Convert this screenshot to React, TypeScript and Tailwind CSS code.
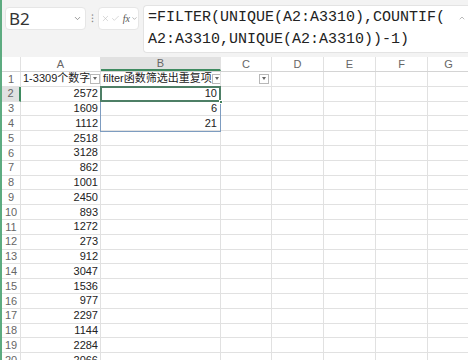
import { ChevronDown, ChevronUp, X, Check } from "lucide-react";

const COLS = ["A", "B", "C", "D", "E", "F", "G"];
const WIDTHS = [80, 120, 51, 52, 52, 52, 42];
const NUMS = [2572, 1609, 1112, 2518, 3128, 862, 1001, 2450, 893, 1272, 273, 912, 3047, 1536, 977, 2297, 1144, 2284, 2066];
const SPILL: Record<number, number> = { 2: 10, 3: 6, 4: 21 };

const FilterBtn = () => (
  <span className="w-[10px] h-[10px] border border-[#b8b8b8] bg-white flex items-center justify-center shrink-0">
    <span className="w-0 h-0 border-l-[2.5px] border-r-[2.5px] border-t-[3px] border-l-transparent border-r-transparent border-t-[#666]" />
  </span>
);

const App = () => {
  const rows = Array.from({ length: 20 }, (_, i) => i + 1);

  return (
    <div className="w-[468px] h-[360px] overflow-hidden bg-white flex font-['Liberation_Sans','Noto_Sans_CJK_SC',sans-serif]">
      {/* green window edge */}
      <div className="w-[2px] bg-[#5dab80] shrink-0" />

      <div className="flex-1 flex flex-col min-w-0">
        {/* formula bar area */}
        <div className="h-[57px] shrink-0 bg-[#f3f3f3] flex items-start pt-[5px] pl-[3px]">
          <div className="mt-[2px] w-[81px] h-[23px] bg-white rounded-[4px] border border-[#e6e6e6] flex items-center justify-between pl-[3px] pr-[3px]">
            <span className="text-[17px] text-[#333] font-['Noto_Sans',sans-serif] leading-none">B2</span>
            <ChevronDown className="w-[9px] h-[9px] text-[#777]" strokeWidth={2} />
          </div>
          <div className="mt-[2px] w-[12px] h-[23px] flex items-center justify-center text-[#888] text-[11px]">⁝</div>
          <div className="mt-[2px] w-[41px] h-[23px] bg-white rounded-[4px] border border-[#e6e6e6] flex items-center gap-[1px] pl-[2px]">
            <X className="w-[9px] h-[9px] text-[#bbb]" strokeWidth={1.5} />
            <Check className="w-[9px] h-[9px] text-[#bbb]" strokeWidth={1.5} />
            <span className="ml-[2px] text-[10px] italic font-['Liberation_Serif',serif] text-[#555] leading-none">fx</span>
            <ChevronDown className="w-[7px] h-[7px] text-[#888]" strokeWidth={2} />
          </div>
          <div className="ml-[4px] flex-1 h-[48px] bg-white rounded-l-[4px] border border-r-0 border-[#e3e3e3] pl-[4px] pt-[1px] relative">
            <div className="font-['Liberation_Mono',monospace] text-[15px] leading-[22px] text-[#222] whitespace-pre">
              {"=FILTER(UNIQUE(A2:A3310),COUNTIF(\nA2:A3310,UNIQUE(A2:A3310))-1)"}
            </div>
            <ChevronUp className="absolute right-[2px] top-[8px] w-[8px] h-[8px] text-[#999]" strokeWidth={2} />
          </div>
        </div>

        {/* sheet */}
        <div className="relative flex-1">
          {/* column headers */}
          <div className="flex h-[15px] border-b border-[#d4d4d4]">
            <div className="w-[19px] shrink-0 border-r border-[#e1e1e1] relative">
              <span className="absolute right-[2px] bottom-[2px] w-0 h-0 border-l-[5px] border-t-[5px] border-l-transparent border-t-transparent border-b-0 border-r-0" />
            </div>
            {COLS.map((c, i) => (
              <div
                key={c}
                style={{ width: WIDTHS[i] }}
                className={`shrink-0 flex items-center justify-center text-[11px] text-[#666] border-r border-[#e1e1e1] ${
                  c === "B" ? "bg-[#e1e1e1] border-b-2 border-b-[#3f8a60] text-[#2f6e4a]" : ""
                }`}
              >
                {c}
              </div>
            ))}
          </div>

          {rows.map((r) => (
            <div key={r} className="flex h-[14.8px]">
              <div
                className={`w-[19px] shrink-0 flex items-center justify-center text-[11px] text-[#666] border-b border-r border-[#e1e1e1] ${
                  r === 2 ? "bg-[#e1e1e1] border-r-2 border-r-[#3f8a60] text-[#2f6e4a]" : ""
                }`}
              >
                {r}
              </div>
              {COLS.map((c, i) => {
                let content: React.ReactNode = null;
                if (r === 1 && c === "A")
                  content = (
                    <div className="flex items-center justify-between w-full pl-[2px] pr-[2px]">
                      <span>1-3309个数字</span>
                      <FilterBtn />
                    </div>
                  );
                else if (r === 1 && c === "B")
                  content = (
                    <div className="flex items-center justify-between w-full pl-[2px] pr-[2px]">
                      <span>filter函数筛选出重复项</span>
                      <FilterBtn />
                    </div>
                  );
                else if (r === 1 && c === "C")
                  content = (
                    <div className="flex items-center justify-end w-full pr-[2px]">
                      <FilterBtn />
                    </div>
                  );
                else if (c === "A" && r >= 2) content = <span className="ml-auto pr-[2px]">{NUMS[r - 2]}</span>;
                else if (c === "B" && SPILL[r] !== undefined) content = <span className="ml-auto pr-[3px]">{SPILL[r]}</span>;
                return (
                  <div
                    key={c}
                    style={{ width: WIDTHS[i] }}
                    className="shrink-0 flex items-center text-[11px] text-[#222] border-b border-r border-[#e1e1e1] whitespace-nowrap overflow-hidden leading-none"
                  >
                    {content}
                  </div>
                );
              })}
            </div>
          ))}

          {/* spill range outline B2:B4 */}
          <div className="absolute left-[98px] top-[29.8px] w-[121px] h-[45.4px] border border-[#7d9cc0] pointer-events-none" />
          {/* active cell B2 */}
          <div className="absolute left-[98px] top-[29px] w-[121px] h-[16px] border-2 border-[#4e7f66] pointer-events-none" />
          <div className="absolute left-[217px] top-[43px] w-[4px] h-[4px] bg-[#3f7f5a] border border-white pointer-events-none" />
        </div>
      </div>
    </div>
  );
};

export default App;
